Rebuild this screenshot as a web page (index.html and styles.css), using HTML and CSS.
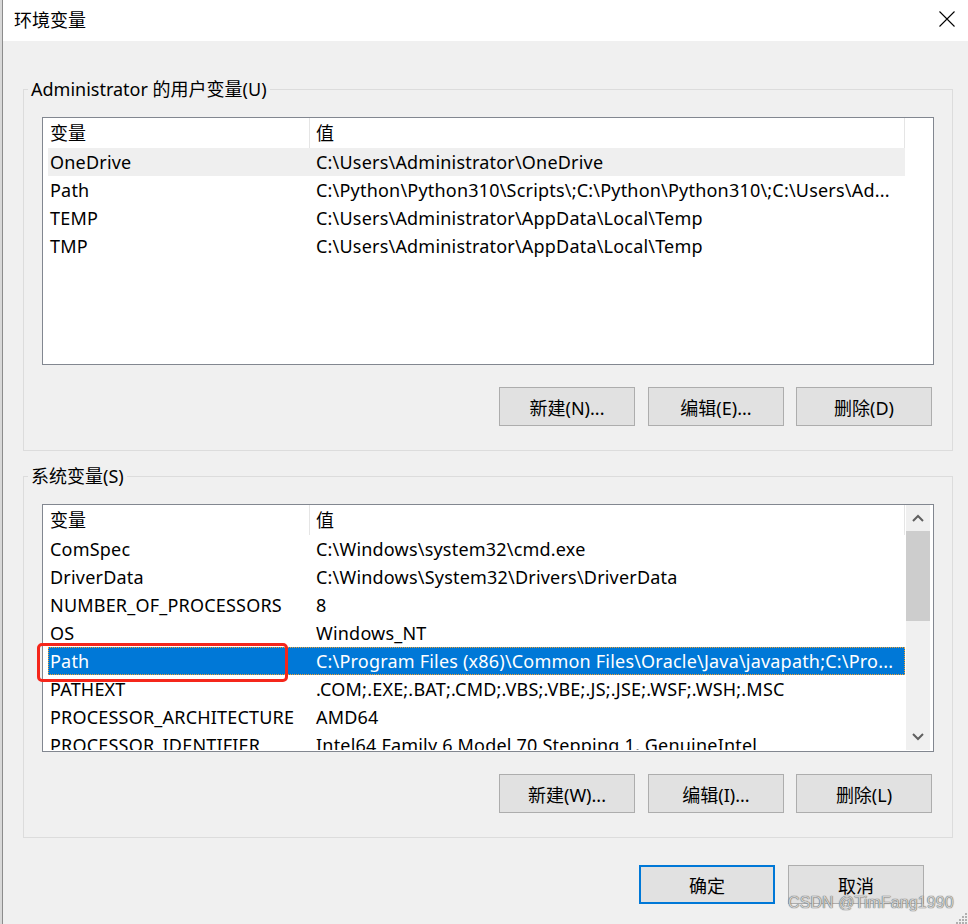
FILE: index.html
```html
<!DOCTYPE html>
<html lang="zh-CN">
<head>
<meta charset="utf-8">
<title>环境变量</title>
<link rel="stylesheet" href="styles.css">
</head>
<body>
<div class="screen">
  <div class="window">
    <div class="titlebar">
      <span class="title">环境变量</span>
      <svg class="close" width="16" height="16" viewBox="0 0 16 16"><path d="M0.5 0.5 L15.5 15.5 M15.5 0.5 L0.5 15.5" stroke="#000" stroke-width="1.1" fill="none"/></svg>
    </div>
    <div class="body">
      <fieldset class="group">
        <legend>Administrator 的用户变量(U)</legend>
        <div class="group-inner">
          <div class="list">
            <div class="table">
              <div class="row head"><div class="c1">变量</div><div class="c2">值</div></div>
              <div class="row hover"><div class="c1">OneDrive</div><div class="c2">C:\Users\Administrator\OneDrive</div></div>
              <div class="row"><div class="c1">Path</div><div class="c2">C:\Python\Python310\Scripts\;C:\Python\Python310\;C:\Users\Ad...</div></div>
              <div class="row"><div class="c1">TEMP</div><div class="c2">C:\Users\Administrator\AppData\Local\Temp</div></div>
              <div class="row"><div class="c1">TMP</div><div class="c2">C:\Users\Administrator\AppData\Local\Temp</div></div>
            </div>
          </div>
          <div class="buttons">
            <button class="btn">新建(N)...</button>
            <button class="btn">编辑(E)...</button>
            <button class="btn">删除(D)</button>
          </div>
        </div>
      </fieldset>
      <fieldset class="group second">
        <legend>系统变量(S)</legend>
        <div class="group-inner">
          <div class="list">
            <div class="table">
              <div class="row head"><div class="c1">变量</div><div class="c2">值</div></div>
              <div class="row"><div class="c1">ComSpec</div><div class="c2">C:\Windows\system32\cmd.exe</div></div>
              <div class="row"><div class="c1">DriverData</div><div class="c2">C:\Windows\System32\Drivers\DriverData</div></div>
              <div class="row"><div class="c1">NUMBER_OF_PROCESSORS</div><div class="c2">8</div></div>
              <div class="row"><div class="c1">OS</div><div class="c2">Windows_NT</div></div>
              <div class="row selected"><div class="c1">Path</div><div class="c2">C:\Program Files (x86)\Common Files\Oracle\Java\javapath;C:\Pro...</div></div>
              <div class="row"><div class="c1">PATHEXT</div><div class="c2">.COM;.EXE;.BAT;.CMD;.VBS;.VBE;.JS;.JSE;.WSF;.WSH;.MSC</div></div>
              <div class="row"><div class="c1">PROCESSOR_ARCHITECTURE</div><div class="c2">AMD64</div></div>
              <div class="row"><div class="c1">PROCESSOR_IDENTIFIER</div><div class="c2">Intel64 Family 6 Model 70 Stepping 1, GenuineIntel</div></div>
            </div>
            <div class="scrollbar">
              <div class="sb-btn"><svg width="12" height="8" viewBox="0 0 12 8"><path d="M1 7 L6 2 L11 7" stroke="#606060" stroke-width="2" fill="none"/></svg></div>
              <div class="thumb"></div>
              <div class="track"></div>
              <div class="sb-btn"><svg width="12" height="8" viewBox="0 0 12 8"><path d="M1 1 L6 6 L11 1" stroke="#606060" stroke-width="2" fill="none"/></svg></div>
            </div>
          </div>
          <div class="buttons">
            <button class="btn">新建(W)...</button>
            <button class="btn">编辑(I)...</button>
            <button class="btn">删除(L)</button>
          </div>
        </div>
      </fieldset>
      <div class="dialog-buttons">
        <button class="btn default">确定</button>
        <button class="btn">取消</button>
      </div>
    </div>
  </div>
  <div class="annotation"></div>
  <div class="watermark">CSDN @TimFang1990</div>
  <svg class="grip" width="12" height="12" viewBox="0 0 12 12">
    <rect x="9" y="1" width="2" height="2" fill="#b0b0b0"/>
    <rect x="6" y="4" width="2" height="2" fill="#b0b0b0"/>
    <rect x="9" y="4" width="2" height="2" fill="#b0b0b0"/>
    <rect x="3" y="7" width="2" height="2" fill="#b0b0b0"/>
    <rect x="6" y="7" width="2" height="2" fill="#b0b0b0"/>
    <rect x="9" y="7" width="2" height="2" fill="#b0b0b0"/>
    <rect x="0" y="10" width="2" height="2" fill="#b0b0b0"/>
    <rect x="3" y="10" width="2" height="2" fill="#b0b0b0"/>
    <rect x="6" y="10" width="2" height="2" fill="#b0b0b0"/>
    <rect x="9" y="10" width="2" height="2" fill="#b0b0b0"/>
  </svg>
</div>
</body>
</html>
```
FILE: styles.css
```css
* { box-sizing: border-box; }
html, body { margin: 0; padding: 0; }
body {
  width: 968px;
  height: 924px;
  overflow: hidden;
  font-family: "Noto Sans", "Noto Sans CJK SC", sans-serif;
  font-size: 18px;
  color: #000;
  background: #d8d8d8;
}
.screen {
  position: relative;
  width: 968px;
  height: 924px;
  display: flex;
  padding-left: 2px;
  background: #d8d8d8;
}
.window {
  flex: 1;
  border-left: 1px solid #8c8c8c;
  background: #f0f0f0;
  display: flex;
  flex-direction: column;
}
.titlebar {
  height: 41px;
  background: #fff;
  display: flex;
  align-items: center;
  justify-content: space-between;
  padding: 0 13px 0 11px;
}
.title {
  font-family: "Noto Sans CJK SC", sans-serif;
  font-size: 18px;
  line-height: 24px;
  margin-top: -3px;
}
.close { margin-top: -3px; }
.body {
  flex: 1;
  padding: 36px 15px 0 20px;
}
.group {
  margin: 0;
  padding: 0;
  border: 1px solid #dcdcdc;
  min-width: 0;
}
.group.second { margin-top: 13px; }
.group legend {
  margin-left: 4px;
  padding: 0 3px;
  line-height: 24px;
  height: 24px;
  font-size: 18px;
}
.group-inner {
  padding: 16px 18px 24px 18px;
}
.list {
  height: 248px;
  border: 1px solid #828790;
  background: #fff;
  display: flex;
  padding: 0 2px 1px 5px;
}
.table {
  width: 857px;
  margin-right: 1px;
  overflow: hidden;
}
.row {
  display: grid;
  grid-template-columns: 262px 595px;
  height: 28px;
  line-height: 28px;
  white-space: nowrap;
  letter-spacing: 0.2px;
}
.row > div { overflow: hidden; }
.row .c1 { padding-left: 2px; }
.row .c2 { padding-left: 6px; }
.row.head { height: 30px; line-height: 30px; letter-spacing: 0; }
.row.head .c1, .row.head .c2 { border-right: 1px solid #e5e5e5; }
.row.hover { background: #efefef; }
.row.selected {
  background: #0078d7;
  color: #fff;
  outline: 1px dotted #f0a030;
  outline-offset: -1px;
}
.scrollbar {
  width: 24px;
  background: #f0f0f0;
  display: flex;
  flex-direction: column;
}
.sb-btn {
  height: 26px;
  display: flex;
  align-items: center;
  justify-content: center;
}
.thumb { height: 90px; background: #cdcdcd; }
.track { flex: 1; }
.buttons {
  display: flex;
  justify-content: flex-end;
  margin-top: 22px;
  margin-right: 2px;
  gap: 12px;
}
.btn {
  width: 136px;
  height: 39px;
  background: #e1e1e1;
  border: 1px solid #adadad;
  font-family: "Noto Sans", "Noto Sans CJK SC", sans-serif;
  font-size: 18px;
  color: #000;
  padding: 0;
  margin: 0;
}
.buttons .btn:first-child { margin-right: 1px; }
.dialog-buttons {
  display: flex;
  justify-content: flex-end;
  gap: 13px;
  margin-top: 27px;
  margin-right: 29px;
}
.btn.default { border: 2px solid #0078d7; }
.annotation {
  position: absolute;
  left: 37px;
  top: 643px;
  width: 251px;
  height: 39px;
  border: 3px solid #f5261b;
  border-radius: 5px;
}
.watermark {
  position: absolute;
  left: 788px;
  top: 894px;
  font-family: "Liberation Sans", sans-serif;
  font-size: 16px;
  color: #cfcfcf;
  text-shadow: 0 0 1px #555, 0 0 1px #777;
  letter-spacing: 0.1px;
}
.grip {
  position: absolute;
  right: 0;
  bottom: 0;
}
```
